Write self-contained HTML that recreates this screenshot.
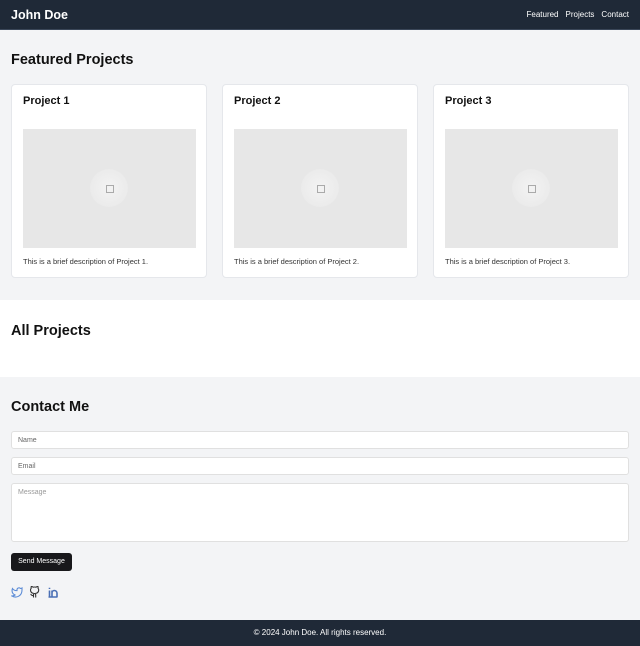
<!DOCTYPE html>
<html><head><style>
*{box-sizing:border-box;margin:0;padding:0}
body{width:640px;height:646px;background:#f3f4f6;font-family:"Liberation Sans",sans-serif;color:#111;position:relative;overflow:hidden}
nav{height:30px;background:#1f2937;color:#fff;display:flex;align-items:center;justify-content:space-between;padding:0 11px;border-bottom:1px solid #3a4658}
nav b{font-size:12.5px}
nav div{display:flex;line-height:10px}
nav span{font-size:8px;margin-left:7px}
h2{font-size:14.5px;font-weight:bold}
.card{position:absolute;top:84px;width:196px;height:194px;background:#fff;border:1px solid #e5e7eb;border-radius:4px}
.card h3{position:absolute;left:11px;top:10px;font-size:11px}
.card .img{position:absolute;left:11px;top:44px;width:173px;height:119px;background:#e7e7e7}
.card .img i{position:absolute;left:67px;top:40px;width:38px;height:38px;border-radius:50%;background:radial-gradient(#f3f3f3,#ebebeb 70%,#e7e7e7)}
.card .img i:after{content:"";position:absolute;left:16px;top:16px;width:6px;height:6px;border:1px solid #aaa}
.card p{position:absolute;left:11px;top:172px;font-size:7.5px;color:#333}
.ta{position:absolute;left:11px;width:618px;background:#fff;border:1px solid #e0e0e0;border-radius:3px;font-size:7px;color:#666;padding:0 6px}
footer{position:absolute;left:0;top:620px;width:640px;height:26px;background:#1f2937;color:#fff;font-size:8px;text-align:center;line-height:26px}
</style></head><body>
<nav><b>John Doe</b><div><span>Featured</span><span>Projects</span><span>Contact</span></div></nav>
<h2 style="position:absolute;left:11px;top:52px">Featured Projects</h2>
<div class="card" style="left:11px"><h3>Project 1</h3><div class="img"><i></i></div><p>This is a brief description of Project 1.</p></div>
<div class="card" style="left:222px"><h3>Project 2</h3><div class="img"><i></i></div><p>This is a brief description of Project 2.</p></div>
<div class="card" style="left:433px"><h3>Project 3</h3><div class="img"><i></i></div><p>This is a brief description of Project 3.</p></div>
<div style="position:absolute;left:0;top:300px;width:640px;height:77px;background:#fff"></div>
<h2 style="position:absolute;left:11px;top:323px">All Projects</h2>
<h2 style="position:absolute;left:11px;top:399px">Contact Me</h2>
<div class="ta" style="top:431px;height:18px;line-height:17px">Name</div>
<div class="ta" style="top:457px;height:18px;line-height:17px">Email</div>
<div class="ta" style="top:483px;height:59px;padding-top:5px;color:#999">Message</div>
<div style="position:absolute;left:11px;top:553px;width:61px;height:18px;background:#18181b;color:#fff;border-radius:3px;font-size:7px;text-align:center;line-height:18px">Send Message</div>
<svg style="position:absolute;left:11px;top:586px" width="52" height="12" viewBox="0 0 52 12" fill="none" stroke-width="1.1">
<path d="M11 2c-.5.3-1 .5-1.5.5A2 2 0 0 0 6 4v.6A4.8 4.8 0 0 1 1.5 2.5s-2 4.5 2.5 6.5A5 5 0 0 1 1 10c4.5 2.5 10 0 10-6V3.4z" stroke="#5b8bd6"/>
<path d="M22.5 11.5V9c0-.8.2-1.2.6-1.5-2-.2-3.6-.9-3.6-3.5 0-.7.3-1.3.7-1.8-.1-.4-.2-1 .1-1.7 0 0 .6-.2 1.8.7a6 6 0 0 1 3 0c1.2-.9 1.8-.7 1.8-.7.3.7.2 1.3.1 1.7.4.5.7 1.1.7 1.8 0 2.6-1.6 3.3-3.6 3.5.4.3.6.9.6 1.5v2.5M22.5 9.5c-2 .6-2-1-3-1.2" stroke="#333"/>
<path d="M38.5 4.5v6.5M38.5 1.8v1.2M41 11V4.5M41 7c0-1.5 1-2.5 2.3-2.5S46 5.5 46 7v4M37.5 11h9" stroke="#4a6fb5" stroke-width="1.6"/>
</svg>
<footer>© 2024 John Doe. All rights reserved.</footer>
</body></html>
